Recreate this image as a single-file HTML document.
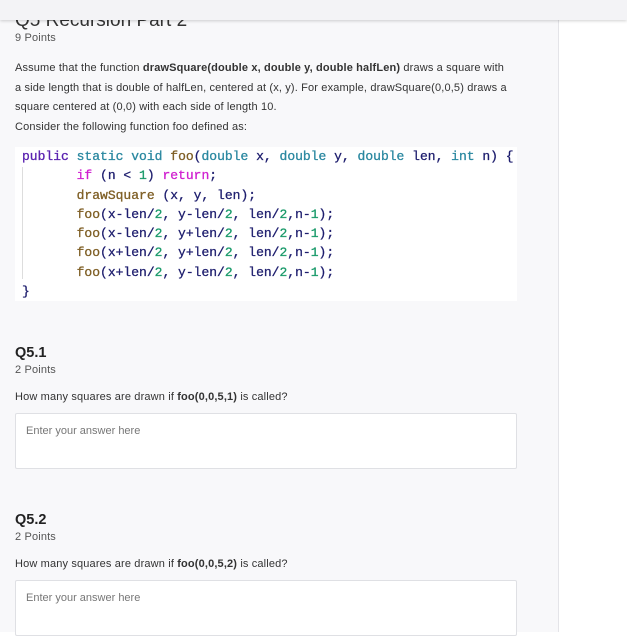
<!DOCTYPE html>
<html><head><style>
html,body{margin:0;padding:0;}
body{width:627px;height:632px;overflow:hidden;background:#fff;font-family:"Liberation Sans",sans-serif;position:relative;}
.left{position:absolute;left:0;top:0;width:558px;height:632px;background:#f8f8fa;border-right:1px solid #e4e4e8;}
.top{position:absolute;left:0;top:0;width:627px;height:20px;background:#f3f3f6;box-shadow:0 1px 3px rgba(0,0,0,0.18);z-index:2;}
.t{position:absolute;left:15px;color:#333;font-size:11px;letter-spacing:0.15px;}
.h{position:absolute;left:15px;color:#222;font-size:14.5px;font-weight:bold;}
.code{position:absolute;left:15px;top:147px;width:502px;height:154px;background:#fff;}
pre{margin:0;position:absolute;left:22px;top:147px;font-family:"Liberation Mono",monospace;font-size:13px;line-height:19.3px;color:#1e1e6e;-webkit-text-stroke:0.3px currentColor;}
.k{color:#5a22b0}.kt{color:#2a88a0}.f{color:#7e5e24}.r{color:#d020d0}.n{color:#1a9a6a}
.bar{position:absolute;left:22px;top:167px;width:1px;height:112px;background:#ddd;}
.box{position:absolute;left:15px;width:500px;height:54px;background:#fff;border:1px solid #dfe0e4;border-radius:2px;}
.ph{position:absolute;left:10px;top:11px;font-size:11px;color:#777;}
</style></head><body>
<div class="left"></div>
<div class="top"></div>
<div class="h" style="top:10px;font-weight:normal;font-size:19px;color:#333;z-index:1;">Q5 Recursion Part 2</div>
<div class="t" style="top:32px;color:#555;">9 Points</div>
<div class="t" style="top:59px;line-height:19.5px;width:497px;">Assume that the function <b>drawSquare(double x, double y, double halfLen)</b> draws a square with a side length that is double of halfLen, centered at (x, y). For example, drawSquare(0,0,5) draws a square centered at (0,0) with each side of length 10.<br>Consider the following function foo defined as:</div>
<div class="code"></div>
<div class="bar"></div>
<pre><span class="k">public</span> <span class="kt">static void</span> <span class="f">foo</span>(<span class="kt">double</span> x, <span class="kt">double</span> y, <span class="kt">double</span> len, <span class="kt">int</span> n) {
       <span class="r">if</span> (n &lt; <span class="n">1</span>) <span class="r">return</span>;
       <span class="f">drawSquare</span> (x, y, len);
       <span class="f">foo</span>(x-len/<span class="n">2</span>, y-len/<span class="n">2</span>, len/<span class="n">2</span>,n-<span class="n">1</span>);
       <span class="f">foo</span>(x-len/<span class="n">2</span>, y+len/<span class="n">2</span>, len/<span class="n">2</span>,n-<span class="n">1</span>);
       <span class="f">foo</span>(x+len/<span class="n">2</span>, y+len/<span class="n">2</span>, len/<span class="n">2</span>,n-<span class="n">1</span>);
       <span class="f">foo</span>(x+len/<span class="n">2</span>, y-len/<span class="n">2</span>, len/<span class="n">2</span>,n-<span class="n">1</span>);
}</pre>
<div class="h" style="top:345px;">Q5.1</div>
<div class="t" style="top:364px;color:#555;">2 Points</div>
<div class="t" style="top:391px;">How many squares are drawn if <b>foo(0,0,5,1)</b> is called?</div>
<div class="box" style="top:413px;"><div class="ph">Enter your answer here</div></div>
<div class="h" style="top:512px;">Q5.2</div>
<div class="t" style="top:531px;color:#555;">2 Points</div>
<div class="t" style="top:558px;">How many squares are drawn if <b>foo(0,0,5,2)</b> is called?</div>
<div class="box" style="top:580px;"><div class="ph">Enter your answer here</div></div>
</body></html>
